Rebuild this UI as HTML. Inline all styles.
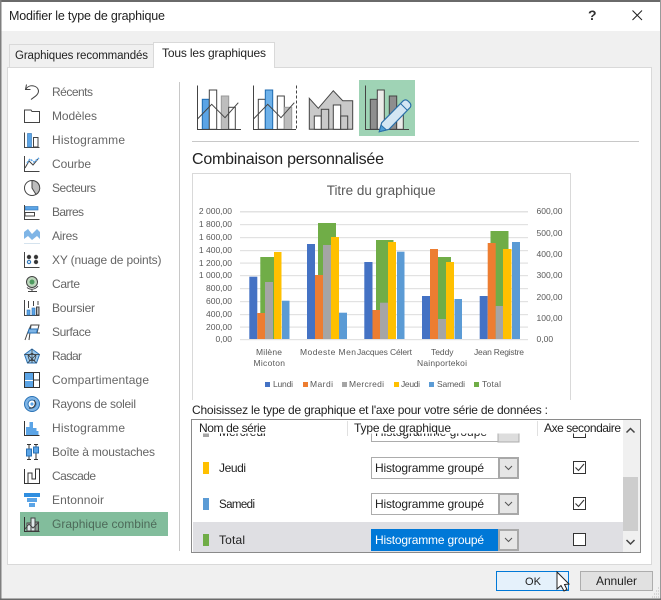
<!DOCTYPE html>
<html lang="fr"><head><meta charset="utf-8"><title>Modifier le type de graphique</title>
<style>
html,body{margin:0;padding:0;background:#f0f0f0;width:661px;height:600px;overflow:hidden}
svg{display:block}
text{font-family:"Liberation Sans",sans-serif;font-size:12px;fill:#222}
.s text{fill:#666}
.a text{font-size:8.5px;fill:#595959}
.c text{font-size:8.5px;fill:#595959}
.ic{fill:none;stroke:#444;stroke-width:1}
.b{fill:#5ba4e6;stroke:#2a72b5;stroke-width:.6}
</style></head><body>
<svg width="661" height="600" viewBox="0 0 661 600" xmlns="http://www.w3.org/2000/svg">
<defs><clipPath id="rows"><rect x="192" y="433.5" width="431" height="118"/></clipPath></defs>
<!-- window -->
<rect width="661" height="600" fill="#f0f0f0"/>
<rect width="661" height="31" fill="#fff"/>
<rect width="661" height="2" fill="#6a6a6a"/>
<rect width="1.500" height="600" fill="#7f7f7f"/>
<rect x="660" width="1" height="600" fill="#9a9a9a"/>
<rect y="598.500" width="661" height="1.500" fill="#6a6a6a"/>
<text x="9" y="20" textLength="156" lengthAdjust="spacing" style="font-size:12.5px">Modifier le type de graphique</text>
<text x="588" y="20" style="font-size:14px;font-weight:bold;fill:#333">?</text>
<path d="M632.500 10.500L642 20M642 10.500L632.500 20" stroke="#222" fill="none"/>
<!-- panel / tabs -->
<rect x="7.500" y="67.500" width="644" height="497" fill="#fff" stroke="#d9d9d9"/>
<rect x="9.500" y="44.500" width="144" height="23" fill="#f0f0f0" stroke="#d9d9d9"/>
<rect x="153.500" y="42.500" width="121" height="25" fill="#fff" stroke="#d9d9d9"/>
<rect x="154" y="65" width="120" height="4" fill="#fff"/>
<text x="15" y="59" textLength="133" lengthAdjust="spacing" style="font-size:11.5px">Graphiques recommandés</text>
<text x="162" y="57" textLength="104" lengthAdjust="spacing">Tous les graphiques</text>
<!-- sidebar -->
<rect x="179" y="82" width="1" height="469" fill="#c8c8c8"/>
<rect x="20" y="512" width="148" height="24" fill="#82bd9c"/>
<g class="s">
<text x="52" y="96" textLength="41" lengthAdjust="spacing">Récents</text>
<text x="52" y="120" textLength="45" lengthAdjust="spacing">Modèles</text>
<text x="52" y="144" textLength="73" lengthAdjust="spacing">Histogramme</text>
<text x="52" y="168" textLength="39" lengthAdjust="spacing">Courbe</text>
<text x="52" y="192" textLength="44" lengthAdjust="spacing">Secteurs</text>
<text x="52" y="216" textLength="32" lengthAdjust="spacing">Barres</text>
<text x="52" y="240" textLength="26" lengthAdjust="spacing">Aires</text>
<text x="52" y="264" textLength="109.500" lengthAdjust="spacing">XY (nuage de points)</text>
<text x="52" y="288" textLength="28" lengthAdjust="spacing">Carte</text>
<text x="52" y="312" textLength="43" lengthAdjust="spacing">Boursier</text>
<text x="52" y="336" textLength="39" lengthAdjust="spacing">Surface</text>
<text x="52" y="360" textLength="30" lengthAdjust="spacing">Radar</text>
<text x="52" y="384" textLength="97" lengthAdjust="spacing">Compartimentage</text>
<text x="52" y="408" textLength="84" lengthAdjust="spacing">Rayons de soleil</text>
<text x="52" y="432" textLength="73" lengthAdjust="spacing">Histogramme</text>
<text x="52" y="456" textLength="103" lengthAdjust="spacing">Boîte à moustaches</text>
<text x="52" y="480" textLength="44" lengthAdjust="spacing">Cascade</text>
<text x="52" y="504" textLength="52" lengthAdjust="spacing">Entonnoir</text>
<text x="52" y="528" textLength="105" lengthAdjust="spacing" style="fill:#4d6a59">Graphique combiné</text>
</g>
<!-- sidebar icons -->
<g class="ic">
<path d="M26 89C29 84 38 85 38.500 91C38.500 95 34 97 31 99.500M26.500 84.500L25.500 89.500L30.500 89.500"/>
<path d="M24.500 122.500V110H31L32 111.500H39.500V122.500Z"/>
<path d="M24.500 132.500V147.500H39.500"/><rect class="b" x="27.500" y="133.500" width="4" height="13.500"/><rect x="33.500" y="137.500" width="4.500" height="9.500"/>
<path d="M24.500 156V171.500H39.500"/><path d="M25 168L29 161L33 165L38 159" stroke="#444"/><path d="M27 163L30 159L34 162L39 158" stroke="#5ba4e6" stroke-width="1.500" stroke-dasharray="2 1"/>
<circle cx="32" cy="188" r="7.500"/><path d="M32 188V180.500A7.500 7.500 0 0 1 36 194.500Z" fill="#bdbdbd"/>
<rect class="b" x="25" y="206.500" width="13" height="3.500"/><rect x="25" y="212.500" width="9.500" height="3.500"/><path d="M24.500 205V219.500H39.500"/>
</g>
<path d="M24 239V232L28 229L32 234L37 229L40 232V239L37 236L32 240L28 236Z" fill="#7fb5e6"/><path d="M24 243.500H40" stroke="#d5e3ee"/>
<g class="ic">
<path d="M24.500 252V267.500H39.500"/><circle cx="29" cy="257" r="1.700" fill="#333"/><circle cx="36" cy="257" r="1.700" fill="#333"/><circle cx="29" cy="262" r="1.700" stroke="#2a72b5" fill="#cfe3f5"/><circle cx="36" cy="262" r="1.700" fill="#333"/>
<circle cx="32" cy="282" r="5.500" fill="#bcd6bc"/><circle cx="32" cy="282" r="2.500" fill="#4e9a5f" stroke="none"/><path d="M27 287.500C30 290 35 290 38 286M32 289V291M28 291.500H37"/>
<path d="M24.500 300V315.500H39.500"/><rect class="b" x="27" y="310" width="3" height="5"/><rect class="b" x="32" y="308" width="3" height="7"/><rect x="36.500" y="307" width="2.500" height="8" fill="#bbb"/><path d="M28.500 301V308M33.500 301V306M38 301V305"/>
<path d="M25 340L27.500 333L31 325H39L37 333H28.500M40 333H37M31 325L29 340" /><path d="M29 329H37.500L36.500 333H28Z" fill="#7fb5e6" stroke="#2a72b5"/>
<path d="M32 349L39.500 354.500L36.500 363H27.500L24.500 354.500Z" stroke="#2a72b5" fill="#9ecbee"/><path d="M32 353L36 356L34.500 360.500H29.500L28 356ZM32 349V363M24.500 354.500L39.500 354.500M27.500 363L36.500 354.500M36.500 363L27.500 354.500" stroke="#333" stroke-width=".7"/>
</g>
<g>
<rect x="24.500" y="372.500" width="15" height="15" fill="#fff" stroke="#333"/>
<rect x="25" y="373" width="8" height="7" fill="#5ba4e6"/><rect x="25" y="381" width="8" height="6" fill="#5ba4e6"/>
<path d="M33.500 373V387M33.500 380H39" stroke="#333" fill="none"/>
<circle cx="32" cy="404" r="7.500" fill="#7fb5e6" stroke="#2a72b5"/><circle cx="32" cy="404" r="4" fill="#fff" stroke="#2a72b5"/><path d="M29 408C34 409 37 404 34 400" stroke="#333" fill="none"/><circle cx="32" cy="404" r="1.600" fill="#5ba4e6"/>
<path d="M24.500 421V435.500H39.500" stroke="#333" fill="none"/><rect x="26" y="427" width="3.500" height="8" fill="#5ba4e6"/><rect x="29.500" y="422" width="3.500" height="13" fill="#5ba4e6"/><rect x="33" y="428" width="3.500" height="7" fill="#5ba4e6"/><rect x="36.500" y="431" width="2" height="4" fill="#5ba4e6"/>
<path d="M29 444V460M36 444V460M27 444.500H31M34 444.500H38M27 459.500H31M34 459.500H38" stroke="#333" fill="none"/><rect x="26.500" y="449" width="5" height="7" fill="#5ba4e6" stroke="#2a72b5"/><rect x="33.500" y="447" width="5" height="6" fill="#5ba4e6" stroke="#2a72b5"/>
<path d="M24.500 469V483.500H39.500V469H35.500V479H32V473H28V483.500" fill="none" stroke="#333"/>
<rect x="24" y="493" width="16" height="4" fill="#2f8ee0"/><rect x="27" y="498" width="10" height="4" fill="#5ba4e6"/><rect x="29" y="503" width="6" height="4" fill="#5ba4e6"/>
<path d="M24.500 517V531.500H39.500" stroke="#333" fill="none"/><rect x="27" y="523" width="4" height="8" fill="#dfe9ea" stroke="#444"/><rect x="31" y="518" width="4" height="13" fill="#dfe9ea" stroke="#444"/><rect x="35" y="522" width="3.500" height="9" fill="#8a9a92" stroke="#444"/><path d="M25 529L29 524L33 528L39 522" stroke="#444" fill="none"/>
</g>
<!-- big icons -->
<g fill="none" stroke="#444" stroke-width="1">
<rect x="202.300" y="99.300" width="7" height="30" fill="#5ba4e6" stroke="#1f6bb0"/><rect x="209.300" y="90" width="7.400" height="39.300" fill="#fff"/><rect x="221.300" y="96" width="7.400" height="33.300" fill="#bdbdbd" stroke="#999"/><rect x="228.700" y="107.300" width="6.600" height="22" fill="#fff"/>
<path d="M197.500 85.500V129.500H241"/><path d="M197.500 119L211.700 104.300L225 117.700L238.300 102.700"/>
<rect x="258.300" y="99.300" width="7" height="30" fill="#fff"/><rect x="265.300" y="90" width="7.400" height="39.300" fill="#6db1ea" stroke="#1f6bb0"/><rect x="277.300" y="96" width="7" height="33.300" fill="#fff"/><rect x="284.300" y="107.300" width="7.400" height="22" fill="#bdbdbd" stroke="#999"/>
<path d="M253.500 85.500V129.500H296"/><path d="M296.500 85.500V129.500" stroke-dasharray="3 2"/><path d="M253.500 119L267.700 104.300L281 117.700L294.300 102.700"/>
<path d="M309.300 98.300L318.300 108.300L333.300 90.700L342.700 100.700H352.700V129.300H309.300Z" fill="#c9c9c9"/>
<rect x="314.300" y="116" width="7" height="13.300" fill="#fff"/><rect x="321.300" y="109.300" width="7.400" height="20" fill="#c9c9c9"/><rect x="333.300" y="105" width="7.400" height="24.300" fill="#fff"/><rect x="340.700" y="116" width="7" height="13.300" fill="#c9c9c9"/>
</g>
<rect x="359" y="80" width="56" height="56" fill="#9fd3b5"/>
<g fill="none" stroke="#444">
<rect x="370.300" y="99.300" width="7" height="30" fill="#8e8e8e"/><rect x="377.300" y="90" width="7" height="39.300" fill="#ececea"/><rect x="389.300" y="96" width="7.400" height="33.300" fill="#8e8e8e"/><rect x="396.700" y="107.300" width="6.600" height="22" fill="#ececea"/>
<path d="M365.500 85.500V129.500H409"/>
<path d="M379.300 131.700L381.700 122.700L403.300 100.700Q406 99 408 101L410 103Q411.500 105 410.300 107.300L389 129.300Z" fill="#d3e6f3" stroke="#2a6fa8" stroke-width="1.200"/>
<path d="M379.300 131.700L381 125L386.500 130Z" fill="#4f9fd8" stroke="#2a6fa8"/>
<path d="M400.500 103.500L407.500 110.500" stroke="#2a6fa8"/>
</g>
<rect x="192" y="141" width="447" height="1" fill="#c8c8c8"/>
<text x="192" y="164" textLength="192" lengthAdjust="spacing" style="font-size:16px">Combinaison personnalisée</text>
<!-- chart -->
<path d="M192.500 400V173.500H570.500V400" fill="#fff" stroke="#d9d9d9"/>
<text x="326.700" y="195" textLength="109" lengthAdjust="spacing" style="font-size:13.500px;fill:#595959">Titre du graphique</text>
<g fill="#e2e2e2">
<rect x="240" y="211" width="288" height="1.500"/><rect x="240" y="224" width="288" height="1.200"/><rect x="240" y="237" width="288" height="1.200"/><rect x="240" y="250" width="288" height="1.200"/><rect x="240" y="262.500" width="288" height="1.200"/><rect x="240" y="275" width="288" height="1.200"/><rect x="240" y="288" width="288" height="1.200"/><rect x="240" y="301" width="288" height="1.200"/><rect x="240" y="314" width="288" height="1.200"/><rect x="240" y="326.500" width="288" height="1.200"/><rect x="240" y="339" width="288" height="1.200"/>
</g>
<g class="a" text-anchor="end">
<text x="232" y="214">2 000,00</text><text x="232" y="227">1 800,00</text><text x="232" y="240">1 600,00</text><text x="232" y="253">1 400,00</text><text x="232" y="266">1 200,00</text><text x="232" y="278">1 000,00</text><text x="232" y="291">800,00</text><text x="232" y="304">600,00</text><text x="232" y="317">400,00</text><text x="232" y="330">200,00</text><text x="232" y="342">0,00</text>
</g>
<g class="a">
<text x="536.500" y="214">600,00</text><text x="536.500" y="236">500,00</text><text x="536.500" y="257">400,00</text><text x="536.500" y="278">300,00</text><text x="536.500" y="300">200,00</text><text x="536.500" y="321">100,00</text><text x="536.500" y="342">0,00</text>
</g>
<!-- bars -->
<g fill="#70ad47">
<rect x="260.300" y="257" width="13.700" height="82"/><rect x="318" y="223" width="18" height="116"/><rect x="376" y="240" width="17.500" height="99"/><rect x="437.300" y="257" width="13.700" height="82"/><rect x="490.500" y="231" width="18" height="108"/>
</g>
<g fill="#4472c4"><rect x="249.300" y="276.700" width="8" height="62.300"/><rect x="307" y="244" width="8" height="95"/><rect x="364.300" y="262" width="8.200" height="77"/><rect x="422" y="296" width="8" height="43"/><rect x="479.700" y="296" width="8" height="43"/></g>
<g fill="#ed7d31"><rect x="257.300" y="313" width="7.700" height="26"/><rect x="315" y="275" width="8" height="64"/><rect x="372.500" y="310" width="7.500" height="29"/><rect x="430" y="249" width="8" height="90"/><rect x="487.700" y="243" width="8" height="96"/></g>
<g fill="#a5a5a5"><rect x="265" y="282" width="8" height="57"/><rect x="323" y="245" width="8" height="94"/><rect x="380" y="302.700" width="8" height="36.300"/><rect x="438" y="319" width="8" height="20"/><rect x="495.700" y="306" width="7.500" height="33"/></g>
<g fill="#ffc000"><rect x="274" y="252" width="7.500" height="87"/><rect x="331" y="237" width="8" height="102"/><rect x="388" y="242" width="8" height="97"/><rect x="446" y="262" width="8" height="77"/><rect x="503" y="249" width="8.500" height="90"/></g>
<g fill="#5b9bd5"><rect x="282" y="300.700" width="7.500" height="38.300"/><rect x="339" y="312.700" width="8" height="26.300"/><rect x="397" y="251.700" width="7.500" height="87.300"/><rect x="454.500" y="299" width="7.500" height="40"/><rect x="512" y="242" width="8" height="97"/></g>
<!-- categories -->
<g class="c">
<text x="256" y="355" textLength="26" lengthAdjust="spacing">Milène</text>
<text x="253.500" y="366" textLength="31.500" lengthAdjust="spacing">Micoton</text>
<text x="300" y="355" textLength="56" lengthAdjust="spacing">Modeste Men</text>
<text x="357" y="355" textLength="55" lengthAdjust="spacing">Jacques Célert</text>
<text x="431" y="355" textLength="22.500" lengthAdjust="spacing">Teddy</text>
<text x="417" y="366" textLength="50" lengthAdjust="spacing">Nainportekoi</text>
<text x="474" y="355" textLength="50" lengthAdjust="spacing">Jean Registre</text>
<rect x="265" y="382" width="5" height="5" fill="#4472c4"/><text x="273" y="387" textLength="20" lengthAdjust="spacing">Lundi</text>
<rect x="303" y="382" width="5" height="5" fill="#ed7d31"/><text x="310" y="387" textLength="23" lengthAdjust="spacing">Mardi</text>
<rect x="342" y="382" width="5" height="5" fill="#a5a5a5"/><text x="349" y="387" textLength="35" lengthAdjust="spacing">Mercredi</text>
<rect x="394" y="382" width="5" height="5" fill="#ffc000"/><text x="401" y="387" textLength="19" lengthAdjust="spacing">Jeudi</text>
<rect x="429" y="382" width="5" height="5" fill="#5b9bd5"/><text x="437" y="387" textLength="28" lengthAdjust="spacing">Samedi</text>
<rect x="474" y="382" width="5" height="5" fill="#70ad47"/><text x="482" y="387" textLength="19" lengthAdjust="spacing">Total</text>
</g>
<rect x="188" y="401" width="400" height="16" fill="#fff"/>
<text x="192" y="414" textLength="356" lengthAdjust="spacing">Choisissez le type de graphique et l'axe pour votre série de données :</text>
<!-- table -->
<rect x="191.500" y="419.500" width="449" height="133" fill="#fff" stroke="#8a8a8a"/>
<rect x="193" y="522" width="430" height="30" fill="#dfdfe3"/>
<g clip-path="url(#rows)">
<rect x="203" y="424" width="6" height="13" fill="#a5a5a5"/>
<text x="219" y="436">Mercredi</text>
<rect x="371.500" y="421.500" width="127" height="20" fill="#fff" stroke="#acacac"/>
<text x="375" y="436">Histogramme groupé</text>
<rect x="498" y="421" width="21" height="21" fill="#ddd" stroke="#acacac"/>
<rect x="573.500" y="425.500" width="12" height="12" fill="#fff" stroke="#333"/>
</g>
<rect x="193" y="420" width="430" height="13.500" fill="#fff"/>
<rect x="347" y="421" width="1" height="15" fill="#e0e0e0"/>
<rect x="537" y="421" width="1" height="15" fill="#e0e0e0"/>
<text x="199" y="432" textLength="67" lengthAdjust="spacing">Nom de série</text>
<text x="354" y="432" textLength="97" lengthAdjust="spacing">Type de graphique</text>
<text x="544" y="432" textLength="77" lengthAdjust="spacing">Axe secondaire</text>
<rect x="203" y="462" width="6" height="12" fill="#ffc000"/>
<rect x="203" y="498" width="6" height="12" fill="#5b9bd5"/>
<rect x="203" y="534" width="6" height="12" fill="#70ad47"/>
<text x="219" y="472" textLength="27" lengthAdjust="spacing">Jeudi</text>
<text x="219" y="508" textLength="36" lengthAdjust="spacing" style="font-size:11.5px">Samedi</text>
<text x="219" y="544" textLength="26" lengthAdjust="spacing">Total</text>
<!-- combos -->
<rect x="371.500" y="457.500" width="127" height="21" fill="#fff" stroke="#acacac"/>
<rect x="371.500" y="493.500" width="127" height="21" fill="#fff" stroke="#acacac"/>
<rect x="371.500" y="529.500" width="127" height="21" fill="#0078d7" stroke="#0078d7"/>
<text x="375" y="472" textLength="109" lengthAdjust="spacing">Histogramme groupé</text>
<text x="375" y="508" textLength="109" lengthAdjust="spacing">Histogramme groupé</text>
<text x="375" y="544" textLength="109" lengthAdjust="spacing" style="fill:#fff">Histogramme groupé</text>
<g fill="#e6e6e6" stroke="#a8a8a8" stroke-width="2">
<rect x="499" y="458" width="19" height="20"/><rect x="499" y="494" width="19" height="20"/><rect x="499" y="530" width="19" height="20"/>
</g>
<path d="M505 466L508.500 469.500L512 466M505 502L508.500 505.500L512 502M505 538L508.500 541.500L512 538" fill="none" stroke="#555"/>
<!-- checkboxes -->
<rect x="573.500" y="461.500" width="12" height="12" fill="#fff" stroke="#333"/>
<rect x="573.500" y="497.500" width="12" height="12" fill="#fff" stroke="#333"/>
<rect x="573.500" y="533.500" width="12" height="12" fill="#fff" stroke="#333"/>
<path d="M575.500 467.500L578.500 470.500L584 464M575.500 503.500L578.500 506.500L584 500" fill="none" stroke="#333" stroke-width="1.100"/>
<!-- scrollbar -->
<rect x="623" y="420" width="17" height="132" fill="#f0f0f0"/>
<rect x="623" y="477" width="15" height="54" fill="#cdcdcd"/>
<path d="M626.500 432.500L630.500 428.500L634.500 432.500M626.500 540L630.500 544L634.500 540" fill="none" stroke="#444" stroke-width="1.500"/>
<!-- buttons -->
<rect x="496.500" y="571.500" width="72" height="19" fill="#e5f1fb" stroke="#0078d7"/>
<rect x="580.500" y="571.500" width="72" height="19" fill="#e1e1e1" stroke="#adadad"/>
<text x="525" y="585" textLength="16" lengthAdjust="spacing" style="font-size:11px">OK</text>
<text x="596" y="585" textLength="41" lengthAdjust="spacing">Annuler</text>
<path d="M557 572V589L561 585.500L564 591L567 589.500L564.500 584.500L569 584Z" fill="#fff" stroke="#222"/>
<!-- resize grip -->
<path d="M658 588h1M656 591h1M658 591h1M654 594h1M656 594h1M658 594h1M652 597h1M654 597h1M656 597h1M658 597h1" stroke="#bdbdbd" fill="none"/>
</svg>
</body></html>
